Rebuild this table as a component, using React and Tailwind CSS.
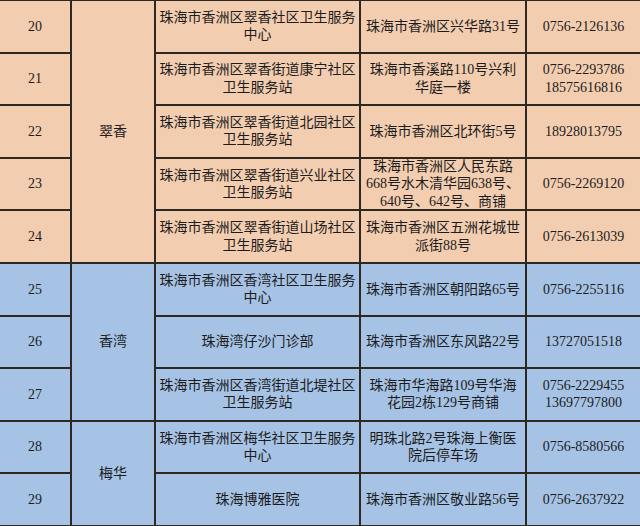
import React from 'react';

const groups = [
  {
    name: '翠香',
    span: 'row-span-5',
    bg: 'bg-[#f3cdb0]',
    rows: [
      { no: 20, org: ['珠海市香洲区翠香社区卫生服务', '中心'], addr: ['珠海市香洲区兴华路31号'], tel: ['0756-2126136'] },
      { no: 21, org: ['珠海市香洲区翠香街道康宁社区', '卫生服务站'], addr: ['珠海市香溪路110号兴利', '华庭一楼'], tel: ['0756-2293786', '18575616816'] },
      { no: 22, org: ['珠海市香洲区翠香街道北园社区', '卫生服务站'], addr: ['珠海市香洲区北环街5号'], tel: ['18928013795'] },
      { no: 23, org: ['珠海市香洲区翠香街道兴业社区', '卫生服务站'], addr: ['珠海市香洲区人民东路', '668号水木清华园638号、', '640号、642号、商铺'], tel: ['0756-2269120'] },
      { no: 24, org: ['珠海市香洲区翠香街道山场社区', '卫生服务站'], addr: ['珠海市香洲区五洲花城世', '派街88号'], tel: ['0756-2613039'] },
    ],
  },
  {
    name: '香湾',
    span: 'row-span-3',
    bg: 'bg-[#a6c3e6]',
    rows: [
      { no: 25, org: ['珠海市香洲区香湾社区卫生服务', '中心'], addr: ['珠海市香洲区朝阳路65号'], tel: ['0756-2255116'] },
      { no: 26, org: ['珠海湾仔沙门诊部'], addr: ['珠海市香洲区东风路22号'], tel: ['13727051518'] },
      { no: 27, org: ['珠海市香洲区香湾街道北堤社区', '卫生服务站'], addr: ['珠海市华海路109号华海', '花园2栋129号商铺'], tel: ['0756-2229455', '13697797800'] },
    ],
  },
  {
    name: '梅华',
    span: 'row-span-2',
    bg: 'bg-[#a6c3e6]',
    rows: [
      { no: 28, org: ['珠海市香洲区梅华社区卫生服务', '中心'], addr: ['明珠北路2号珠海上衡医', '院后停车场'], tel: ['0756-8580566'] },
      { no: 29, org: ['珠海博雅医院'], addr: ['珠海市香洲区敬业路56号'], tel: ['0756-2637922'] },
    ],
  },
];

function Cell({ bg, lines, className = '' }) {
  return (
    <div className={`${bg} flex flex-col items-center justify-center text-center ${className}`}>
      {lines.map((line) => (
        <span className="whitespace-nowrap leading-[17.5px]" key={line}>{line}</span>
      ))}
    </div>
  );
}

export default function App() {
  return (
    <div
      className="w-[640px] h-[526px] overflow-hidden bg-[#2e2823] pt-[1px] text-[14px] text-[#1c1c1c]"
      style={{ fontFamily: '"Liberation Serif", "Noto Sans CJK SC", serif' }}
    >
      <div className="grid grid-cols-[70px_82px_203px_164px_113px] grid-rows-[repeat(10,50.6px)] gap-[2px]">
        {groups.map((group) =>
          group.rows.map((row, i) => (
            <React.Fragment key={row.no}>
              <Cell bg={group.bg} lines={[String(row.no)]} />
              {i === 0 ? <Cell bg={group.bg} lines={[group.name]} className={group.span} /> : null}
              <Cell bg={group.bg} lines={row.org} />
              <Cell bg={group.bg} lines={row.addr} />
              <Cell bg={group.bg} lines={row.tel} />
            </React.Fragment>
          ))
        )}
      </div>
    </div>
  );
}
